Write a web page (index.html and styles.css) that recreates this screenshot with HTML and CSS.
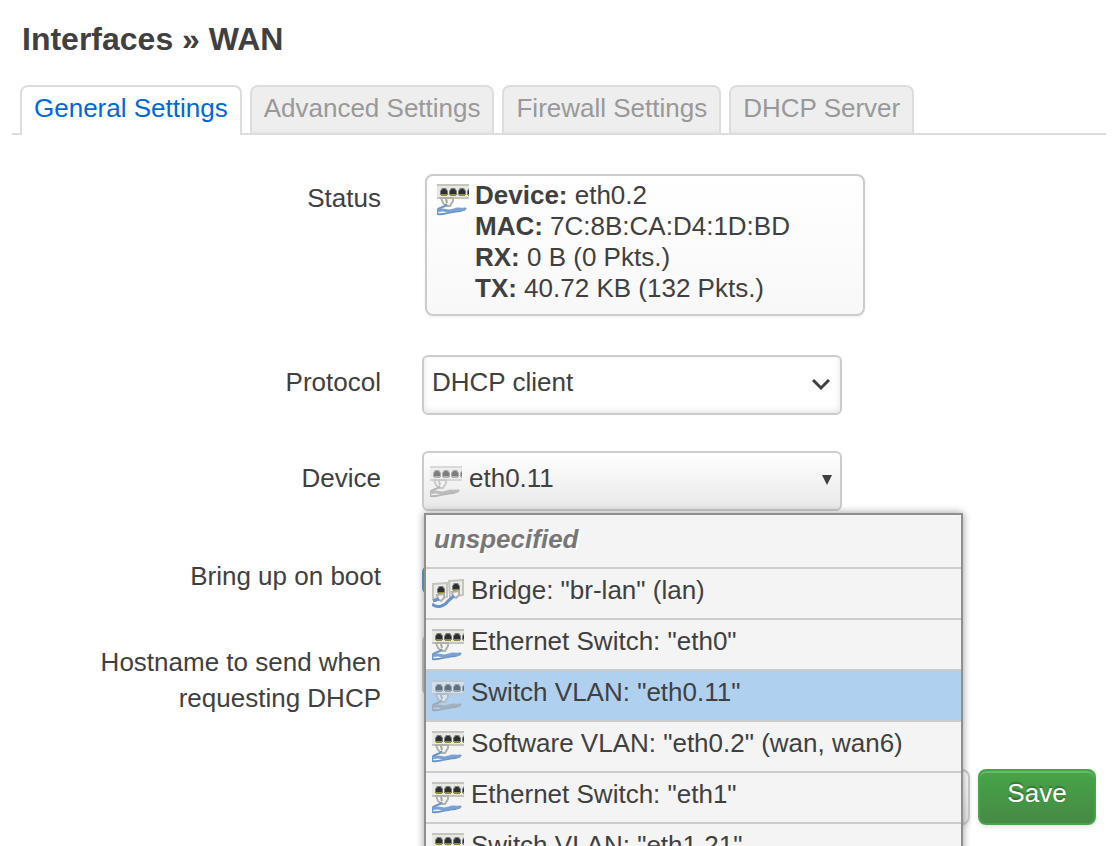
FILE: index.html
```
<!DOCTYPE html>
<html lang="en">
<head>
	<meta charset="UTF-8">
	<meta name="viewport" content="width=device-width, initial-scale=1.0">
	<title>Interfaces » WAN</title>
	<link rel="stylesheet" href="styles.css">
</head>
<body>
	<svg class="sprite" aria-hidden="true">
		<defs>
			<g id="port">
				<path d="M-4 3V-1L-2-4H2L4-1V3z" fill="#7b7d78"/>
				<path d="M-3 2h6v2h-6z" fill="#8f8a3c"/>
				<path d="M-3-1L-1-3H1L3-1V2H-3z" fill="#2b2e33"/>
			</g>
			<symbol id="switch" viewBox="0 0 32 32">
				<path d="M0 0h32v15H0z" fill="#e8e8e3"/>
				<path d="M0 1h32M0 14h32" stroke="#c4c5c0" stroke-width="2"/>
				<use href="#port" x="7" y="8"/>
				<use href="#port" x="16" y="8"/>
				<use href="#port" x="25" y="8"/>
				<use href="#port" x="34" y="8"/>
				<path d="M4 14l2 5 3 3h4l3-5v-3z" fill="#f4f4f1" stroke="#b0b1ac" stroke-width="2"/>
				<path d="M9 15l1 4" stroke="#a5a6a1" stroke-width="2"/>
				<path d="M10 20C7 24 3 23 0 26V30C8 31 12 28 16 28C20 26 24 29 29 24" fill="none" stroke="#6793c9" stroke-width="2"/>
				<path d="M1 27C8 24 10 29 17 26C21 24 25 26 28 25" fill="none" stroke="#7ba1d2" stroke-width="3"/>
			</symbol>
			<symbol id="bridge" viewBox="0 0 32 32">
				<path d="M1 6l14-1v14l-14 2z" fill="#eaeae6" stroke="#c4c5c0" stroke-width="2"/>
				<path d="M17 3l14-1v15l-13 2z" fill="#eaeae6" stroke="#c4c5c0" stroke-width="2"/>
				<use href="#port" x="9" y="12"/>
				<use href="#port" x="24" y="9"/>
				<path d="M5 17l1 4 3 2 3-3v-4z" fill="#f4f4f1" stroke="#b0b1ac" stroke-width="2"/>
				<path d="M20 14l1 4 3 2 3-3v-4z" fill="#f4f4f1" stroke="#b0b1ac" stroke-width="2"/>
				<path d="M7 21L1 23M0 26C5 31 13 28 16 23L22 18" fill="none" stroke="#6793c9" stroke-width="3"/>
			</symbol>
		</defs>
	</svg>

	<h1>Interfaces » WAN</h1>

	<nav class="tabs">
		<a class="tab active" href="#general">General Settings</a>
		<a class="tab" href="#advanced">Advanced Settings</a>
		<a class="tab" href="#firewall">Firewall Settings</a>
		<a class="tab" href="#dhcp">DHCP Server</a>
	</nav>

	<form id="general">
		<div class="row">
			<span class="title">Status</span>
			<div class="field">
				<div class="status">
					<svg class="icon"><use href="#switch"/></svg>
					<div>
						<strong>Device:</strong> eth0.2<br>
						<strong>MAC:</strong> 7C:8B:CA:D4:1D:BD<br>
						<strong>RX:</strong> 0 B (0 Pkts.)<br>
						<strong>TX:</strong> 40.72 KB (132 Pkts.)
					</div>
				</div>
			</div>
		</div>

		<div class="row">
			<label class="title" for="protocol">Protocol</label>
			<div class="field select">
				<select id="protocol" class="control">
					<option>DHCP client</option>
				</select>
				<svg class="chevron" viewBox="0 0 18 12"><path d="M1 1l8 8 8-8" fill="none" stroke="#404040" stroke-width="3"/></svg>
			</div>
		</div>

		<div class="row">
			<label class="title" for="device">Device</label>
			<div class="field dropdown">
				<button id="device" class="control" type="button" aria-haspopup="listbox" aria-expanded="true">
					<svg class="icon down"><use href="#switch"/></svg>
					<span class="value">eth0.11</span>
					<svg class="arrow" viewBox="0 0 10 10"><path d="M0 0h10L5 10z" fill="#404040"/></svg>
				</button>
				<ul class="menu" role="listbox">
					<li class="empty" role="option">unspecified</li>
					<li role="option"><svg class="icon"><use href="#bridge"/></svg>Bridge: "br-lan" (lan)</li>
					<li role="option"><svg class="icon"><use href="#switch"/></svg>Ethernet Switch: "eth0"</li>
					<li class="selected" role="option" aria-selected="true"><svg class="icon down"><use href="#switch"/></svg>Switch VLAN: "eth0.11"</li>
					<li role="option"><svg class="icon"><use href="#switch"/></svg>Software VLAN: "eth0.2" (wan, wan6)</li>
					<li role="option"><svg class="icon"><use href="#switch"/></svg>Ethernet Switch: "eth1"</li>
					<li role="option"><svg class="icon"><use href="#switch"/></svg>Switch VLAN: "eth1.21"</li>
				</ul>
			</div>
		</div>

		<div class="row">
			<label class="title" for="boot">Bring up on boot</label>
			<div class="field"><input id="boot" class="check" type="checkbox" checked></div>
		</div>

		<div class="row">
			<label class="title" for="hostname">Hostname to send when requesting DHCP</label>
			<div class="field"><input id="hostname" class="control" type="text"></div>
		</div>

		<div class="actions">
			<button class="btn" type="button"></button>
			<button class="btn save" type="submit">Save</button>
		</div>
	</form>
</body>
</html>
```

FILE: styles.css
```
* {
	box-sizing: border-box;
}

body {
	margin: 0;
	padding: 21px 10px 0 12px;
	height: 100vh;
	overflow: hidden;
	background: #fff;
	color: #404040;
	font-family: "Liberation Sans", Arial, sans-serif;
	font-size: 26px;
	line-height: 36px;
}

.sprite {
	position: absolute;
	width: 0;
	height: 0;
}

h1 {
	margin: 0 0 28px;
	padding-left: 10px;
	font-size: 32px;
	line-height: 36px;
}

/* tabs */

.tabs {
	display: flex;
	gap: 8px;
	padding-left: 8px;
	border-bottom: 2px solid #ddd;
}

.tab {
	height: 48px;
	padding: 3px 12px 0;
	border: 2px solid #ddd;
	border-bottom: 0;
	border-radius: 8px 8px 0 0;
	background: linear-gradient(#eee 92%, #e6e6e6);
	color: #999;
	text-decoration: none;
	white-space: nowrap;
}

.tab.active {
	height: 50px;
	margin-bottom: -2px;
	background: #fff;
	color: #0069d6;
}

/* form rows */

form {
	padding: 36px 10px 0 8px;
}

.row {
	display: flex;
	gap: 41px;
	margin-bottom: 36px;
}

.title {
	flex: 0 0 361px;
	padding-top: 9px;
	text-align: right;
}

.field {
	flex: 0 1 420px;
}

.icon {
	flex: none;
	width: 32px;
	height: 32px;
	filter: blur(0.5px);
}

.icon.down {
	filter: grayscale(1) blur(0.5px);
	opacity: 0.6;
}

.status {
	display: inline-flex;
	gap: 6px;
	width: 440px;
	margin: 3px;
	padding: 4px 10px 10px;
	border: 2px solid #ccc;
	border-radius: 8px;
	background: linear-gradient(#fff, #f8f8f8);
	box-shadow: 0 1px 3px #eee;
	line-height: 31px;
	vertical-align: top;
}

.status .icon {
	margin-top: 4px;
}

.control {
	display: flex;
	align-items: center;
	width: 100%;
	height: 60px;
	padding: 0 8px 6px;
	border: 2px solid #ccc;
	border-radius: 6px;
	background: #fff;
	box-shadow: inset 0 -2px 6px rgba(0, 0, 0, 0.1);
	color: #404040;
	font: inherit;
	appearance: none;
}

.select {
	display: grid;
}

.select .control,
.select .chevron {
	grid-area: 1 / 1;
}

.chevron {
	align-self: center;
	justify-self: end;
	width: 18px;
	height: 12px;
	margin-right: 12px;
	pointer-events: none;
}

.dropdown {
	position: relative;
	padding-bottom: 2px;
}

.dropdown .control {
	gap: 7px;
	padding: 0 8px 6px 6px;
	background: linear-gradient(#fff, #e8e8e8);
	box-shadow: none;
}

.dropdown .control .icon {
	margin-top: 8px;
}

.arrow {
	width: 10px;
	height: 10px;
	margin: 3px 0 0 auto;
}

.menu {
	position: absolute;
	top: 100%;
	left: 2px;
	z-index: 1;
	width: 539px;
	margin: 0;
	padding: 0;
	border: 2px solid #918e8c;
	background: #f4f4f4;
	box-shadow: 0 0 8px rgba(0, 0, 0, 0.4);
	list-style: none;
}

.menu li {
	display: flex;
	gap: 7px;
	height: 51px;
	padding: 3px 6px 0;
	border-bottom: 2px solid #ccc;
	white-space: nowrap;
}

.menu .icon {
	margin-top: 6px;
}

.menu .empty {
	height: 54px;
	padding: 6px 8px 0;
	color: #777;
	font-style: italic;
	font-weight: bold;
	text-shadow: 2px 2px 0 #fff;
}

.menu .selected {
	background: #b0d0f0;
}

.check {
	width: 28px;
	height: 28px;
	margin: 17px 0 5px;
	border: 2px solid #5aabd0;
	border-radius: 6px;
	background: #6cb5d9;
	appearance: none;
	vertical-align: top;
}

/* footer buttons */

.actions {
	display: flex;
	justify-content: flex-end;
	gap: 8px;
	margin-top: 53px;
}

.btn {
	width: 118px;
	height: 56px;
	padding: 0 0 8px;
	border: 2px solid #ccc;
	border-radius: 8px;
	background: linear-gradient(#fff, #e8e8e8);
	box-shadow: 0 2px 4px rgba(0, 0, 0, 0.1);
	font: inherit;
}

.save {
	border-color: #46a546;
	background: linear-gradient(#46a546, #468a46);
	box-shadow: inset 0 2px 0 rgba(255, 255, 255, 0.2), 0 2px 4px rgba(0, 0, 0, 0.1);
	color: #fff;
	text-shadow: 0 -2px 1px rgba(0, 0, 0, 0.25);
}
```
